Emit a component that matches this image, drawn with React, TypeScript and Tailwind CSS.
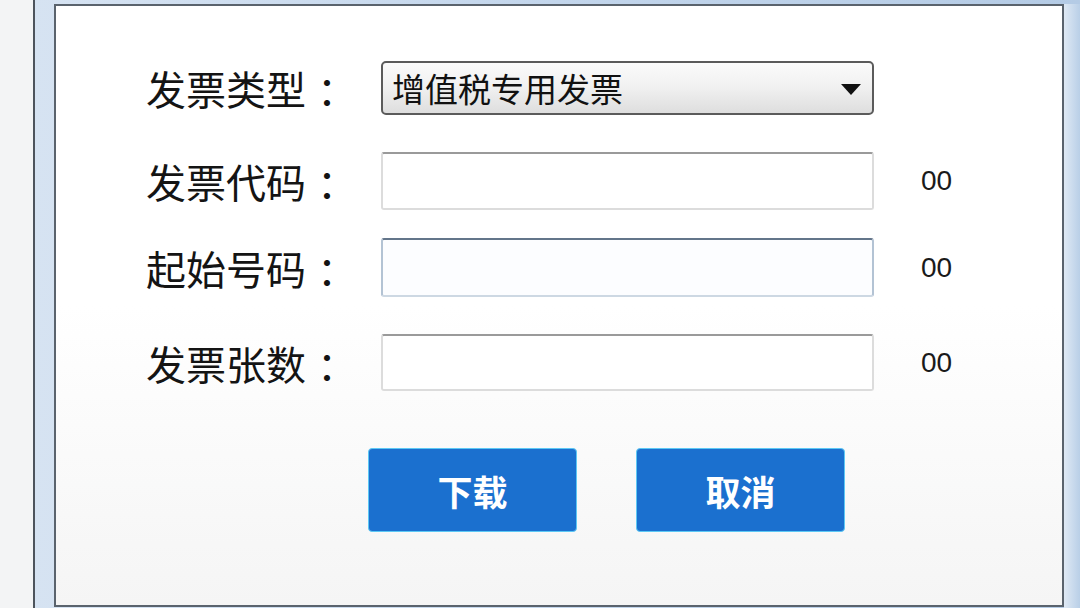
import { useState } from "react";

const cjk = { fontFamily: '"Noto Sans CJK SC", "Noto Sans", sans-serif' };

function FieldLabel({ text }: { text: string }) {
  return (
    <div className="flex w-[325px] shrink-0 pl-[90px] text-[40px] leading-none text-[#141414]" style={cjk}>
      <span>{text}</span>
      <span className="ml-[11px]">：</span>
    </div>
  );
}

function Suffix() {
  return (
    <div className="ml-[47px] text-[28px] leading-none text-[#1a1a1a]" style={{ fontFamily: '"Liberation Sans", Arial, sans-serif' }}>
      00
    </div>
  );
}

export default function App() {
  const [kind, setKind] = useState("增值税专用发票");
  const [code, setCode] = useState("");
  const [start, setStart] = useState("");
  const [count, setCount] = useState("");

  return (
    <div className="flex h-[608px] w-[1080px] overflow-hidden bg-[#f3f4f5]">
      <div className="w-[33px] shrink-0" />
      {/* window frame */}
      <div className="flex flex-1 border-l-2 border-[#4d545c] bg-gradient-to-r from-[#d6e3f2] via-[#c3d6ec] to-[#b4cbe5] pl-[19px] pt-[4px]">
        <div className="flex h-[603px] flex-1 flex-col border-2 border-[#5a636d] bg-gradient-to-b from-white via-white to-[#f5f5f5]">
          <div className="flex flex-col pt-[55px]">
            {/* 发票类型 */}
            <div className="flex items-center">
              <FieldLabel text="发票类型" />
              <div className="relative flex h-[54px] w-[493px] items-center rounded-[5px] border-2 border-[#5b5b5b] bg-gradient-to-b from-[#fbfbfb] via-[#f0f0f0] to-[#dedede] pl-[9px]">
                <span className="text-[33px] leading-none text-[#111]" style={cjk}>
                  {kind}
                </span>
                <svg className="absolute right-[11px] top-[21px]" width="20" height="11" viewBox="0 0 20 11">
                  <path d="M0 0 H20 L10 11 Z" fill="#111" />
                </svg>
                <select
                  value={kind}
                  onChange={(e) => setKind(e.target.value)}
                  className="absolute inset-0 cursor-pointer opacity-0"
                >
                  <option>增值税专用发票</option>
                  <option>增值税普通发票</option>
                </select>
              </div>
            </div>

            {/* 发票代码 */}
            <div className="mt-[37px] flex items-center">
              <FieldLabel text="发票代码" />
              <input
                value={code}
                onChange={(e) => setCode(e.target.value)}
                className="h-[58px] w-[493px] rounded-[3px] border-2 border-[#dcdcdc] border-t-[#9a9a9a] bg-white px-2 text-[28px] outline-none"
              />
              <Suffix />
            </div>

            {/* 起始号码 */}
            <div className="mt-[28px] flex items-center">
              <FieldLabel text="起始号码" />
              <input
                value={start}
                onChange={(e) => setStart(e.target.value)}
                className="h-[59px] w-[493px] rounded-[3px] border-2 border-[#b3c3d4] border-t-[#63758a] border-b-[#cdd8e3] bg-[#fcfdff] px-2 text-[28px] outline-none"
              />
              <Suffix />
            </div>

            {/* 发票张数 */}
            <div className="mt-[37px] flex items-center">
              <FieldLabel text="发票张数" />
              <input
                value={count}
                onChange={(e) => setCount(e.target.value)}
                className="h-[57px] w-[493px] rounded-[3px] border-2 border-[#dcdcdc] border-t-[#9a9a9a] bg-white px-2 text-[28px] outline-none"
              />
              <Suffix />
            </div>

            {/* buttons */}
            <div className="mt-[57px] flex gap-[59px] pl-[312px]">
              <button
                className="flex h-[84px] w-[209px] items-center justify-center rounded-[4px] border border-[#5cc8f5] bg-[#1b70cf] text-[35px] font-bold leading-none text-white"
                style={cjk}
              >
                下载
              </button>
              <button
                className="flex h-[84px] w-[209px] items-center justify-center rounded-[4px] border border-[#5cc8f5] bg-[#1b70cf] text-[35px] font-bold leading-none text-white"
                style={cjk}
              >
                取消
              </button>
            </div>
          </div>
        </div>
        <div className="w-[16px] shrink-0 bg-gradient-to-r from-[#dfe9f4] to-[#b9cfe7]" />
      </div>
    </div>
  );
}
